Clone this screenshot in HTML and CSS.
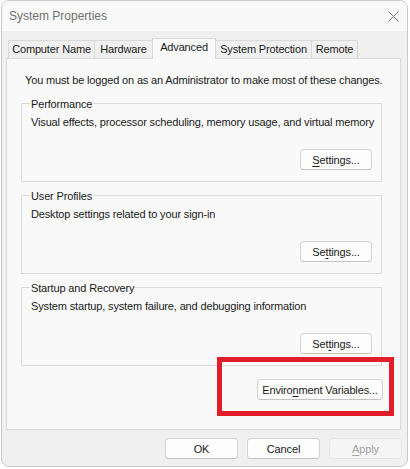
FILE: index.html
```html
<!DOCTYPE html>
<html lang="en">
<head>
<meta charset="UTF-8" />
<title>System Properties</title>
<link rel="stylesheet" href="styles.css">
</head>
<body>
  <div class="window">
    <div class="titlebar">
      <span class="title">System Properties</span>
      <svg class="close" width="11" height="11" viewBox="0 0 11 11">
        <path d="M0.5 0.5 L10.5 10.5 M10.5 0.5 L0.5 10.5" stroke="#7a7a7a" stroke-width="1" fill="none" />
      </svg>
    </div>

    <div class="tabs">
      <div class="tab t-name">Computer Name</div>
      <div class="tab t-hw">Hardware</div>
      <div class="tab t-adv active">Advanced</div>
      <div class="tab t-sp">System Protection</div>
      <div class="tab t-rem">Remote</div>
    </div>

    <div class="panel">
      <p class="note">You must be logged on as an Administrator to make most of these changes.</p>

      <div class="group">
        <span class="group-title">Performance</span>
        <p class="desc">Visual effects, processor scheduling, memory usage, and virtual memory</p>
        <button class="btn btn-settings"><u>S</u>ettings...</button>
      </div>

      <div class="group">
        <span class="group-title">User Profiles</span>
        <p class="desc">Desktop settings related to your sign-in</p>
        <button class="btn btn-settings">Se<u>t</u>tings...</button>
      </div>

      <div class="group">
        <span class="group-title">Startup and Recovery</span>
        <p class="desc">System startup, system failure, and debugging information</p>
        <button class="btn btn-settings">Set<u>t</u>ings...</button>
      </div>

      <div class="env-row">
        <button class="btn btn-env">Enviro<u>n</u>ment Variables...</button>
      </div>
    </div>

    <div class="actions">
      <button class="btn btn-action">OK</button>
      <button class="btn btn-action">Cancel</button>
      <button class="btn btn-action disabled"><u>A</u>pply</button>
    </div>

    <div class="highlight"></div>
  </div>
</body>
</html>
```

FILE: styles.css
```css
/* base */
* {
  box-sizing: border-box;
}
body {
  margin: 0;
  background: #ffffff;
  font-family: 'Liberation Sans', Arial, sans-serif;
  font-size: 11px;
  letter-spacing: -0.15px;
  color: #1a1a1a;
  white-space: nowrap;
}
.window {
  position: relative;
  margin-left: 1px;
  width: 407px;
  height: 467px;
  background: #f0f0f0;
  border: 1px solid #c9c9c9;
  border-radius: 8px;
  overflow: hidden;
}

/* title bar */
.titlebar {
  height: 30px;
  background: #f9f9f9;
  display: flex;
  align-items: center;
  justify-content: space-between;
  padding: 0 8px 0 7px;
}
.title {
  color: #707070;
  font-size: 12px;
  letter-spacing: 0;
}
.close {
  margin-top: 1px;
}

/* tabs */
.tabs {
  display: flex;
  align-items: flex-end;
  height: 27px;
  padding-left: 6px;
}
.tab {
  height: 18px;
  line-height: 17px;
  border: 1px solid #d9d9d9;
  border-bottom: none;
  background: #f0f0f0;
  text-align: center;
  margin-left: -1px;
}
.tab:first-child {
  margin-left: 0;
}
.t-name { width: 87px; }
.t-hw { width: 59px; }
.t-adv { width: 64px; }
.t-sp { width: 97px; }
.t-rem { width: 47px; }
.tab.active {
  height: 21px;
  line-height: 17px;
  background: #f9f9f9;
  margin-bottom: -1px;
  position: relative;
  z-index: 1;
  padding-bottom: 2px;
}

/* tab page */
.panel {
  margin-left: 4px;
  width: 395px;
  height: 372px;
  background: #f9f9f9;
  border: 1px solid #d9d9d9;
  padding: 13px 0 0 14px;
}
.note {
  margin: 0 0 15px 4px;
  line-height: 16px;
}
.group {
  width: 361px;
  height: 79px;
  border: 1px solid #dcdcdc;
  padding: 0 9px 11px 8px;
  margin-bottom: 13px;
  display: flex;
  flex-direction: column;
  align-items: flex-start;
}
.group-title {
  margin-top: -8px;
  padding: 0 1px;
  line-height: 16px;
  background: #f9f9f9;
}
.desc {
  margin: 2px 0 0 1px;
  line-height: 16px;
}

/* buttons */
.btn {
  font-family: inherit;
  font-size: 11px;
  letter-spacing: -0.15px;
  color: #1a1a1a;
  height: 21px;
  padding: 0;
  background: #fdfdfd;
  border: 1px solid #d3d3d3;
  border-bottom-color: #c2c2c2;
  border-radius: 4px;
}
.btn u {
  text-underline-offset: 2px;
}
.btn-settings {
  width: 72px;
  margin-top: auto;
  align-self: flex-end;
}
.env-row {
  width: 362px;
  display: flex;
  justify-content: flex-end;
  margin-top: 2px;
}
.btn-env {
  width: 126px;
}
.actions {
  display: flex;
  justify-content: flex-end;
  gap: 9px;
  padding: 8px 5px 0 0;
}
.btn-action {
  width: 73px;
}
.btn.disabled {
  background: #f5f5f5;
  border-color: #e5e5e5;
  color: #a3a3a3;
}

/* annotation box */
.highlight {
  position: absolute;
  left: 215px;
  top: 356px;
  width: 177px;
  height: 59px;
  border: 5px solid #e21d2a;
}
```
